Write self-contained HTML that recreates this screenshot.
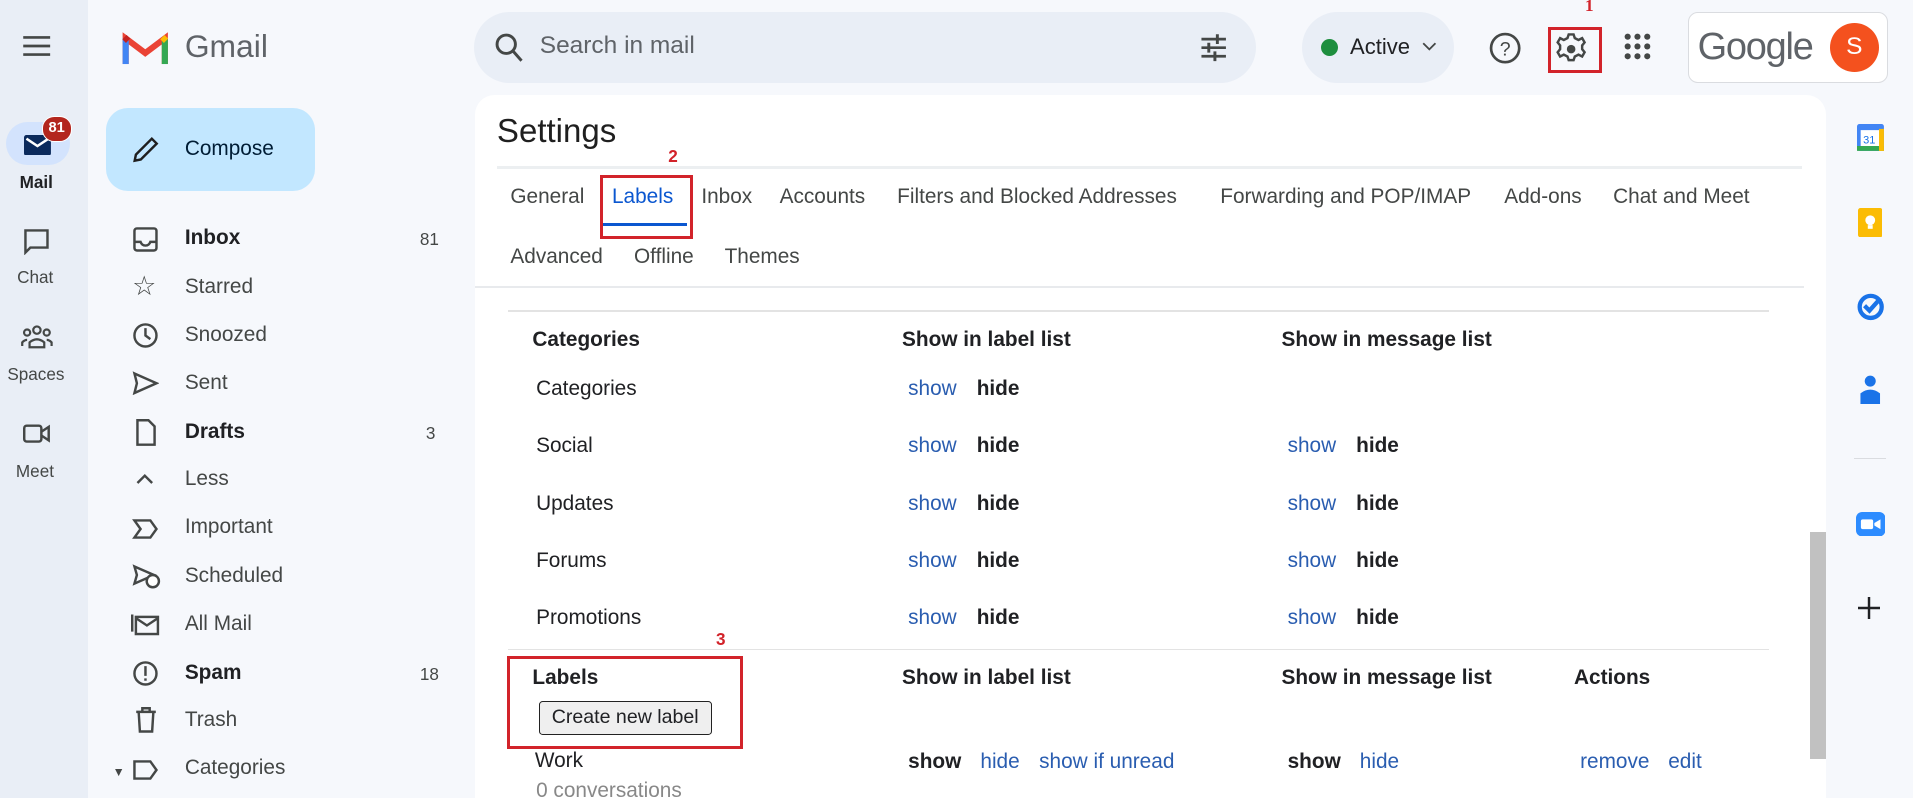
<!DOCTYPE html>
<html><head><meta charset="utf-8"><style>
html,body{margin:0;padding:0;overflow:hidden;background:#f6f8fc}
#w{position:relative;width:1563px;height:652px;zoom:1.22395;background:#f6f8fc;font-family:"Liberation Sans",Arial,sans-serif;color:#202124;overflow:hidden}
.a{position:absolute;white-space:nowrap}
.t{position:absolute;white-space:nowrap;font-size:17px;line-height:22px;height:22px}
.b{font-weight:bold}
.l{color:#2a5db0}
.g{color:#444746}
svg{position:absolute}
</style></head><body><div id="w">
<div class="a" style="left:0;top:0;width:72px;height:652px;background:#e9eef6"></div>
<svg style="left:18px;top:29px" width="24" height="18"><path d="M1 2h22M1 9h22M1 16h22" stroke="#444746" stroke-width="2.2"/></svg>
<div class="a" style="left:5px;top:100px;width:52px;height:35px;border-radius:18px;background:#d3e3fd"></div>
<svg style="left:20px;top:110px" width="22" height="17"><rect x="0" y="0" width="22" height="17" rx="2" fill="#0b2a5c"/><path d="M2 3l9 6 9-6" stroke="#fff" stroke-width="2" fill="none"/></svg>
<div class="a" style="left:34px;top:95px;width:23px;height:19px;border-radius:10px;background:#b3261e;color:#fff;font-size:12px;font-weight:bold;text-align:center;line-height:19px;border:1px solid #fff">81</div>
<div class="t" style="left:16px;top:138px;font-size:14px;font-weight:bold;color:#202124">Mail</div>
<svg style="left:19px;top:186px" width="22" height="22"><path d="M2 2h18v14H6l-4 4z" stroke="#444746" stroke-width="2" fill="none"/></svg>
<div class="t g" style="left:14px;top:216px;font-size:14px">Chat</div>
<svg style="left:17px;top:265px" width="26" height="22"><circle cx="13" cy="5" r="3" stroke="#444746" stroke-width="1.8" fill="none"/><circle cx="5" cy="7" r="2.5" stroke="#444746" stroke-width="1.8" fill="none"/><circle cx="21" cy="7" r="2.5" stroke="#444746" stroke-width="1.8" fill="none"/><path d="M7 19v-4q6-5 12 0v4zM1 18v-3q2-2 4-2M25 18v-3q-2-2-4-2" stroke="#444746" stroke-width="1.8" fill="none"/></svg>
<div class="t g" style="left:6px;top:295px;font-size:14px">Spaces</div>
<svg style="left:19px;top:345px" width="24" height="20"><rect x="1" y="3" width="14" height="13" rx="2" stroke="#444746" stroke-width="2" fill="none"/><path d="M15 8l6-4v11l-6-4" stroke="#444746" stroke-width="2" fill="none"/></svg>
<div class="t g" style="left:13px;top:374px;font-size:14px">Meet</div>
<svg style="left:100px;top:25px" width="38" height="28"><path d="M3 27V6l16 12L35 6v21" fill="none" stroke="#ea4335" stroke-width="5"/><path d="M3 27V6" stroke="#4285f4" stroke-width="5"/><path d="M35 27V6" stroke="#34a853" stroke-width="5"/><path d="M33 5l3 3" stroke="#fbbc04" stroke-width="5"/><path d="M2 5l3 3" stroke="#c5221f" stroke-width="5"/></svg>
<div class="a" style="left:151px;top:23px;font-size:26px;color:#5f6368">Gmail</div>
<div class="a" style="left:87px;top:88px;width:170px;height:68px;border-radius:18px;background:#c2e7ff"></div>
<svg style="left:107px;top:110px" width="24" height="24"><path d="M3 21l1-5L17 3l4 4L8 20z" stroke="#1f1f1f" stroke-width="2" fill="none"/></svg>
<div class="t" style="left:151px;top:111px;color:#001d35">Compose</div>
<svg style="left:108px;top:185px" width="22" height="22"><rect x="2" y="2" width="18" height="18" rx="2" stroke="#444746" stroke-width="2" fill="none"/><path d="M2 13h5q1 3 4 3t4-3h5" stroke="#444746" stroke-width="2" fill="none"/></svg>
<div class="t b" style="left:151px;top:184px">Inbox</div><div class="t g" style="left:343px;top:185px;font-size:14px">81</div>
<div class="t" style="left:108px;top:223px;font-size:22px;color:#444746">☆</div><div class="t g" style="left:151px;top:224px">Starred</div>
<svg style="left:108px;top:263px" width="22" height="22"><circle cx="11" cy="11" r="9" stroke="#444746" stroke-width="2" fill="none"/><path d="M11 5v6l4 3" stroke="#444746" stroke-width="2" fill="none"/></svg><div class="t g" style="left:151px;top:263px">Snoozed</div>
<svg style="left:108px;top:303px" width="22" height="20"><path d="M2 2l18 8-18 8 2-8z" stroke="#444746" stroke-width="2" fill="none"/></svg><div class="t g" style="left:151px;top:302px">Sent</div>
<svg style="left:110px;top:342px" width="18" height="22"><path d="M2 1h9l5 5v15H2z" stroke="#444746" stroke-width="2" fill="none"/></svg><div class="t b" style="left:151px;top:342px">Drafts</div><div class="t g" style="left:348px;top:343px;font-size:14px">3</div>
<svg style="left:110px;top:386px" width="16" height="12"><path d="M2 9l6-6 6 6" stroke="#444746" stroke-width="2" fill="none"/></svg><div class="t g" style="left:151px;top:381px">Less</div>
<svg style="left:108px;top:423px" width="22" height="18"><path d="M2 2h13l5 7-5 7H2l5-7z" stroke="#444746" stroke-width="2" fill="none"/></svg><div class="t g" style="left:151px;top:420px">Important</div>
<svg style="left:108px;top:461px" width="24" height="20"><path d="M2 2l16 7-16 7 2-7z" stroke="#444746" stroke-width="2" fill="none"/><circle cx="17" cy="14" r="5" fill="#fff" stroke="#444746" stroke-width="2"/></svg><div class="t g" style="left:151px;top:460px">Scheduled</div>
<svg style="left:107px;top:500px" width="24" height="20"><rect x="4" y="4" width="18" height="14" stroke="#444746" stroke-width="2" fill="none"/><path d="M4 5l9 6 9-6M1 2v14" stroke="#444746" stroke-width="2" fill="none"/></svg><div class="t g" style="left:151px;top:499px">All Mail</div>
<svg style="left:108px;top:539px" width="22" height="22"><circle cx="11" cy="11" r="9" stroke="#444746" stroke-width="2" fill="none"/><path d="M11 5v8M11 15v2" stroke="#444746" stroke-width="2"/></svg><div class="t b" style="left:151px;top:539px">Spam</div><div class="t g" style="left:343px;top:540px;font-size:14px">18</div>
<svg style="left:110px;top:578px" width="18" height="22"><path d="M1 4h16M6 4V1h6v3M3 4l1 16h10l1-16" stroke="#444746" stroke-width="2" fill="none"/></svg><div class="t g" style="left:151px;top:578px">Trash</div>
<div class="t g" style="left:92px;top:620px;font-size:10px">▼</div><svg style="left:108px;top:620px" width="22" height="18"><path d="M2 2h13l5 7-5 7H2z" stroke="#444746" stroke-width="2" fill="none"/></svg><div class="t g" style="left:151px;top:617px">Categories</div>
<div class="a" style="left:387px;top:10px;width:639px;height:58px;border-radius:29px;background:#e9eef6"></div>
<svg style="left:404px;top:26px" width="24" height="26"><circle cx="10" cy="10" r="7.5" stroke="#444746" stroke-width="2.4" fill="none"/><path d="M15.5 15.5l7 8" stroke="#444746" stroke-width="2.4"/></svg>
<div class="a" style="left:441px;top:26px;font-size:20px;color:#5f6368">Search in mail</div>
<svg style="left:980px;top:27px" width="24" height="24"><path d="M2 5h20M2 12h20M2 19h20" stroke="#444746" stroke-width="2.2"/><path d="M15 1v8M8 8v8M13 15v8" stroke="#444746" stroke-width="2.4"/></svg>
<div class="a" style="left:1064px;top:10px;width:124px;height:58px;border-radius:29px;background:#e9eef6"></div>
<div class="a" style="left:1079px;top:32px;width:14px;height:14px;border-radius:50%;background:#1e8e3e"></div>
<div class="a" style="left:1103px;top:28px;font-size:18px;color:#202124">Active</div>
<svg style="left:1162px;top:34px" width="12" height="8"><path d="M1 1l5 5 5-5" stroke="#444746" stroke-width="1.5" fill="none"/></svg>
<svg style="left:1216px;top:25px" width="28" height="28"><circle cx="14" cy="14" r="11.5" stroke="#444746" stroke-width="2.2" fill="none"/><text x="14" y="20" font-size="16" text-anchor="middle" fill="#444746" font-family="Liberation Sans">?</text></svg>
<svg style="left:1270px;top:26px" width="28" height="28"><circle cx="14" cy="14" r="3.5" fill="#444746"/><path d="M12 2h4l1 3 3 1.5 3-1.5 2 3.5-2 2.5v3l2 2.5-2 3.5-3-1.5-3 1.5-1 3h-4l-1-3-3-1.5-3 1.5-2-3.5 2-2.5v-3l-2-2.5 2-3.5 3 1.5 3-1.5z" stroke="#444746" stroke-width="2" fill="none"/></svg>
<div class="a" style="left:1265px;top:22px;width:39px;height:33px;border:2.5px solid #d2232a"></div>
<div class="a b" style="left:1295px;top:-3px;font-size:14px;color:#d2232a;font-family:'Liberation Serif',serif">1</div>
<svg style="left:1327px;top:27px" width="22" height="22"><g fill="#444746"><circle cx="3" cy="3" r="2.5"/><circle cx="11" cy="3" r="2.5"/><circle cx="19" cy="3" r="2.5"/><circle cx="3" cy="11" r="2.5"/><circle cx="11" cy="11" r="2.5"/><circle cx="19" cy="11" r="2.5"/><circle cx="3" cy="19" r="2.5"/><circle cx="11" cy="19" r="2.5"/><circle cx="19" cy="19" r="2.5"/></g></svg>
<div class="a" style="left:1379px;top:10px;width:162px;height:56px;border-radius:8px;background:#fff;border:1px solid #dadce0"></div>
<div class="a" style="left:1387px;top:21px;font-size:31px;color:#5f6368;letter-spacing:-1px">Google</div>
<div class="a" style="left:1495px;top:19px;width:40px;height:40px;border-radius:50%;background:#f4511e;color:#fff;font-size:20px;text-align:center;line-height:40px">S</div>
<div class="a" style="left:388px;top:78px;width:1104px;height:600px;border-radius:16px;background:#fff"></div>
<div class="a" style="left:406px;top:92px;font-size:27px;color:#1f1f1f">Settings</div>
<div class="a" style="left:406px;top:136px;width:1066px;height:2px;background:#eceff1"></div>
<div class="t g" style="left:417px;top:150px">General</div>
<div class="t" style="left:500px;top:150px;color:#0b57d0">Labels</div>
<div class="a" style="left:493px;top:182px;width:68px;height:3px;background:#0b57d0"></div>
<div class="a" style="left:490px;top:143px;width:71px;height:47px;border:2.5px solid #d2232a"></div>
<div class="a b" style="left:546px;top:119px;font-size:14px;color:#d2232a">2</div>
<div class="t g" style="left:573px;top:150px">Inbox</div>
<div class="t g" style="left:637px;top:150px">Accounts</div>
<div class="t g" style="left:733px;top:150px">Filters and Blocked Addresses</div>
<div class="t g" style="left:997px;top:150px">Forwarding and POP/IMAP</div>
<div class="t g" style="left:1229px;top:150px">Add-ons</div>
<div class="t g" style="left:1318px;top:150px">Chat and Meet</div>
<div class="t g" style="left:417px;top:199px">Advanced</div>
<div class="t g" style="left:518px;top:199px">Offline</div>
<div class="t g" style="left:592px;top:199px">Themes</div>
<div class="a" style="left:388px;top:234px;width:1086px;height:1px;background:#e8eaed"></div>
<div class="a" style="left:415px;top:253px;width:1030px;height:2px;background:#e3e3e3"></div>
<div class="t b" style="left:435px;top:267px">Categories</div>
<div class="t b" style="left:737px;top:267px">Show in label list</div>
<div class="t b" style="left:1047px;top:267px">Show in message list</div>
<div class="t" style="left:438px;top:307px">Categories</div><div class="t l" style="left:742px;top:307px">show</div><div class="t b" style="left:798px;top:307px">hide</div>
<div class="t" style="left:438px;top:354px">Social</div><div class="t l" style="left:742px;top:354px">show</div><div class="t b" style="left:798px;top:354px">hide</div><div class="t l" style="left:1052px;top:354px">show</div><div class="t b" style="left:1108px;top:354px">hide</div>
<div class="t" style="left:438px;top:401px">Updates</div><div class="t l" style="left:742px;top:401px">show</div><div class="t b" style="left:798px;top:401px">hide</div><div class="t l" style="left:1052px;top:401px">show</div><div class="t b" style="left:1108px;top:401px">hide</div>
<div class="t" style="left:438px;top:448px">Forums</div><div class="t l" style="left:742px;top:448px">show</div><div class="t b" style="left:798px;top:448px">hide</div><div class="t l" style="left:1052px;top:448px">show</div><div class="t b" style="left:1108px;top:448px">hide</div>
<div class="t" style="left:438px;top:494px">Promotions</div><div class="t l" style="left:742px;top:494px">show</div><div class="t b" style="left:798px;top:494px">hide</div><div class="t l" style="left:1052px;top:494px">show</div><div class="t b" style="left:1108px;top:494px">hide</div>
<div class="a" style="left:415px;top:530px;width:1030px;height:1px;background:#e3e3e3"></div>
<div class="a b" style="left:585px;top:514px;font-size:14px;color:#d2232a">3</div>
<div class="t b" style="left:435px;top:543px">Labels</div>
<div class="t b" style="left:737px;top:543px">Show in label list</div>
<div class="t b" style="left:1047px;top:543px">Show in message list</div>
<div class="t b" style="left:1286px;top:543px">Actions</div>
<div class="a" style="left:440px;top:573px;width:140px;height:26px;border:1.5px solid #222;border-radius:3px;background:#efefef;font-size:16px;line-height:26px;text-align:center">Create new label</div>
<div class="a" style="left:414px;top:536px;width:188px;height:71px;border:2.5px solid #d2232a"></div>
<div class="t" style="left:437px;top:611px">Work</div>
<div class="t b" style="left:742px;top:612px">show</div><div class="t l" style="left:801px;top:612px">hide</div><div class="t l" style="left:849px;top:612px">show if unread</div>
<div class="t b" style="left:1052px;top:612px">show</div><div class="t l" style="left:1111px;top:612px">hide</div>
<div class="t l" style="left:1291px;top:612px">remove</div><div class="t l" style="left:1363px;top:612px">edit</div>
<div class="t" style="left:438px;top:636px;color:#888">0 conversations</div>
<div class="a" style="left:1479px;top:435px;width:13px;height:185px;background:#c1c1c1"></div>
<svg style="left:1517px;top:101px" width="22" height="22"><rect x="0" y="0" width="22" height="22" rx="2" fill="#4285f4"/><rect x="3" y="5" width="16" height="14" fill="#fff"/><path d="M0 20h22" stroke="#34a853" stroke-width="4"/><path d="M20 4v18" stroke="#fbbc04" stroke-width="4"/><text x="10" y="16" font-size="9" fill="#1a73e8" text-anchor="middle" font-family="Liberation Sans">31</text></svg>
<svg style="left:1518px;top:170px" width="20" height="24"><rect x="0" y="0" width="20" height="24" rx="2" fill="#fbbc04"/><circle cx="10" cy="10" r="4" fill="#fff"/><rect x="8" y="14" width="4" height="3" fill="#fff"/></svg>
<svg style="left:1516px;top:238px" width="24" height="24"><circle cx="12" cy="13" r="9" stroke="#1a73e8" stroke-width="3.5" fill="none"/><path d="M7 12l4 4 9-10" stroke="#1a73e8" stroke-width="3.5" fill="none"/></svg>
<svg style="left:1518px;top:306px" width="20" height="24"><circle cx="10" cy="5" r="4.5" fill="#1a73e8"/><path d="M2 24v-9q8-6 16 0v9z" fill="#1a73e8"/></svg>
<div class="a" style="left:1515px;top:374px;width:26px;height:1px;background:#dadce0"></div>
<svg style="left:1516px;top:418px" width="24" height="20"><rect x="0" y="0" width="24" height="20" rx="5" fill="#2d8cff"/><rect x="4" y="6" width="10" height="8" rx="1.5" fill="#fff"/><path d="M15 9l5-3v8l-5-3z" fill="#fff"/></svg>
<svg style="left:1518px;top:488px" width="18" height="18"><path d="M9 0v18M0 9h18" stroke="#202124" stroke-width="2"/></svg>
</div></body></html>
